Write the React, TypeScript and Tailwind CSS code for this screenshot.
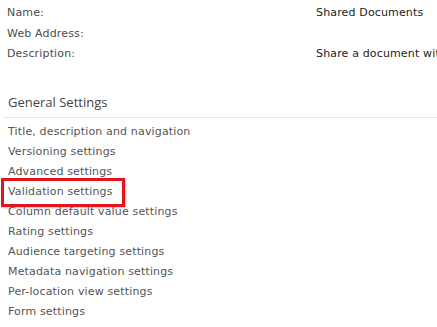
import * as React from "react"

const props = [
  { label: "Name:", value: "Shared Documents" },
  { label: "Web Address:", value: "" },
  { label: "Description:", value: "Share a document with the team by adding it to this document library." },
]

const links = [
  "Title, description and navigation",
  "Versioning settings",
  "Advanced settings",
  "Validation settings",
  "Column default value settings",
  "Rating settings",
  "Audience targeting settings",
  "Metadata navigation settings",
  "Per-location view settings",
  "Form settings",
]

export default function App() {
  return (
    <div className="h-[327px] w-[437px] overflow-hidden bg-white font-['DejaVu_Sans',Verdana,sans-serif] text-[11px] tracking-[0.15px]">
      <div className="flex flex-col pt-[3px]">
        {props.map((p) => (
          <div key={p.label} className="flex h-[20.5px] items-center whitespace-nowrap">
            <div className="w-[316px] shrink-0 pl-[7px] text-[#4c4c4c]">{p.label}</div>
            <div className="min-w-0 overflow-hidden text-[#1a1a1a]">{p.value}</div>
          </div>
        ))}
      </div>
      <div className="mt-[27px] ml-[3px] border-b border-[#d6ecee] pb-[5px] pl-[5px] font-['Open_Sans','Noto_Sans',sans-serif] text-[13px] leading-[20px] tracking-normal text-[#444]">
        General Settings
      </div>
      <ul className="flex flex-col pt-[5px]">
        {links.map((l, i) => (
          <li key={l} className="flex h-[20px] items-center pl-[8px] whitespace-nowrap text-[#555]">
            <span className="relative">
              {l}
              {i === 3 && (
                <span className="absolute -top-[6px] -right-[12px] -bottom-[6px] -left-[7px] border-[3px] border-[#e3141c] shadow-[1px_1px_2px_rgba(0,0,0,0.25)]" />
              )}
            </span>
          </li>
        ))}
      </ul>
    </div>
  )
}
